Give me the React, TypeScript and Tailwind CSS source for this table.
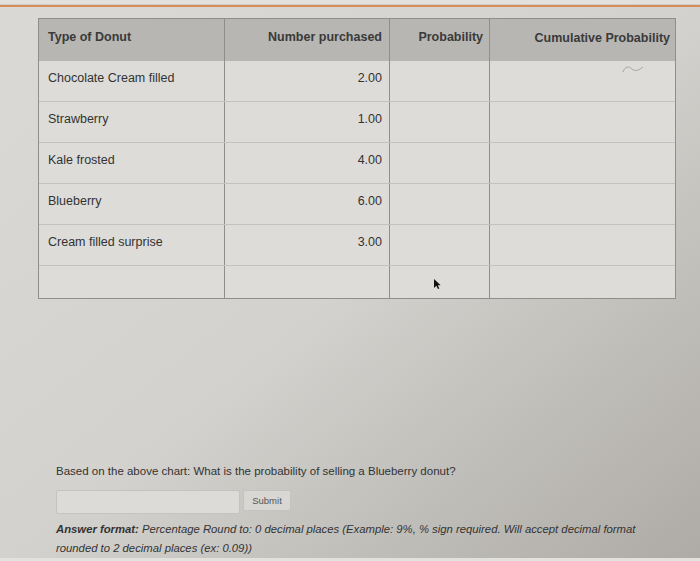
import React from "react";

const rows = [
  { name: "Chocolate Cream filled", n: "2.00" },
  { name: "Strawberry", n: "1.00" },
  { name: "Kale frosted", n: "4.00" },
  { name: "Blueberry", n: "6.00" },
  { name: "Cream filled surprise", n: "3.00" },
];

export default function App() {
  return (
    <div
      className="w-[700px] h-[561px] overflow-hidden flex flex-col bg-linear-to-br from-[#dad9d5] via-[#d3d2ce] to-[#aeaba6] text-[#2e2e2e]"
      style={{ fontFamily: '"Liberation Sans", Arial, sans-serif' }}
    >
      <div className="h-[5px] bg-[#e3e1dd] border-b border-[#cfcdc9]" />
      <div className="h-[3px] bg-[#d98b5a]" />
      <div className="pl-[38px] pt-[11px] relative">
        <div className="w-[638px] border border-[#8f8e8b] bg-[#dddcd8]">
          <div className="flex h-[42px] bg-[#b7b6b2] text-[12.5px] font-bold text-[#3a3a3a]">
            <div className="w-[186px] border-r border-[#8f8e8b] pl-[9px] pt-[9px]">Type of Donut</div>
            <div className="w-[165px] border-r border-[#8f8e8b] pr-[7px] pt-[9px] text-right">Number purchased</div>
            <div className="w-[100px] border-r border-[#8f8e8b] pr-[6px] pt-[9px] text-right">Probability</div>
            <div className="flex-1 pr-[5px] pt-[10px] text-right">Cumulative Probability</div>
          </div>
          {rows.map((r) => (
            <div key={r.name} className="flex h-[41px] border-b border-[#c3c2be] text-[12.5px] text-[#333]">
              <div className="w-[186px] border-r border-[#8f8e8b] pl-[9px] pt-[8px]">{r.name}</div>
              <div className="w-[165px] border-r border-[#8f8e8b] pr-[7px] pt-[8px] text-right">{r.n}</div>
              <div className="w-[100px] border-r border-[#8f8e8b]" />
              <div className="flex-1" />
            </div>
          ))}
          <div className="flex h-[32px]">
            <div className="w-[186px] border-r border-[#8f8e8b]" />
            <div className="w-[165px] border-r border-[#8f8e8b]" />
            <div className="w-[100px] border-r border-[#8f8e8b]" />
            <div className="flex-1" />
          </div>
        </div>
        <svg className="absolute left-[621px] top-[57px]" width="24" height="10" viewBox="0 0 24 10">
          <path d="M2 8 C4 2, 8 2, 11 5 S18 6, 22 3" stroke="#9a9994" strokeWidth="0.8" fill="none" />
        </svg>
        <svg className="absolute left-[433px] top-[271px]" width="8" height="12" viewBox="0 0 8 12">
          <path d="M1 1 L1 10 L3.3 7.8 L5 11 L6.3 10.4 L4.8 7.2 L7.6 7.2 Z" fill="#111" />
        </svg>
      </div>
      <div className="pl-[56px] pt-[164px]">
        <div className="text-[11.5px] text-[#333]">
          Based on the above chart: What is the probability of selling a Blueberry donut?
        </div>
        <div className="flex items-start gap-[3px] mt-[10px]">
          <div className="w-[184px] h-[24px] border border-[#c4c3bf] bg-[#dcdbd7] rounded-[2px]" />
          <div className="w-[48px] h-[21px] border border-[#c4c3bf] bg-[#d8d7d3] rounded-[2px] text-[9.5px] text-[#555] flex items-center justify-center">
            Submit
          </div>
        </div>
        <div className="mt-[6px] text-[11.3px] italic leading-[19px] text-[#333] w-[620px]">
          <span className="font-bold">Answer format:</span> Percentage Round to: 0 decimal places (Example: 9%, % sign required. Will accept decimal format
          <br />
          rounded to 2 decimal places (ex: 0.09))
        </div>
      </div>
      <div className="mt-auto h-[3px] bg-[#e2e1de]" />
    </div>
  );
}
